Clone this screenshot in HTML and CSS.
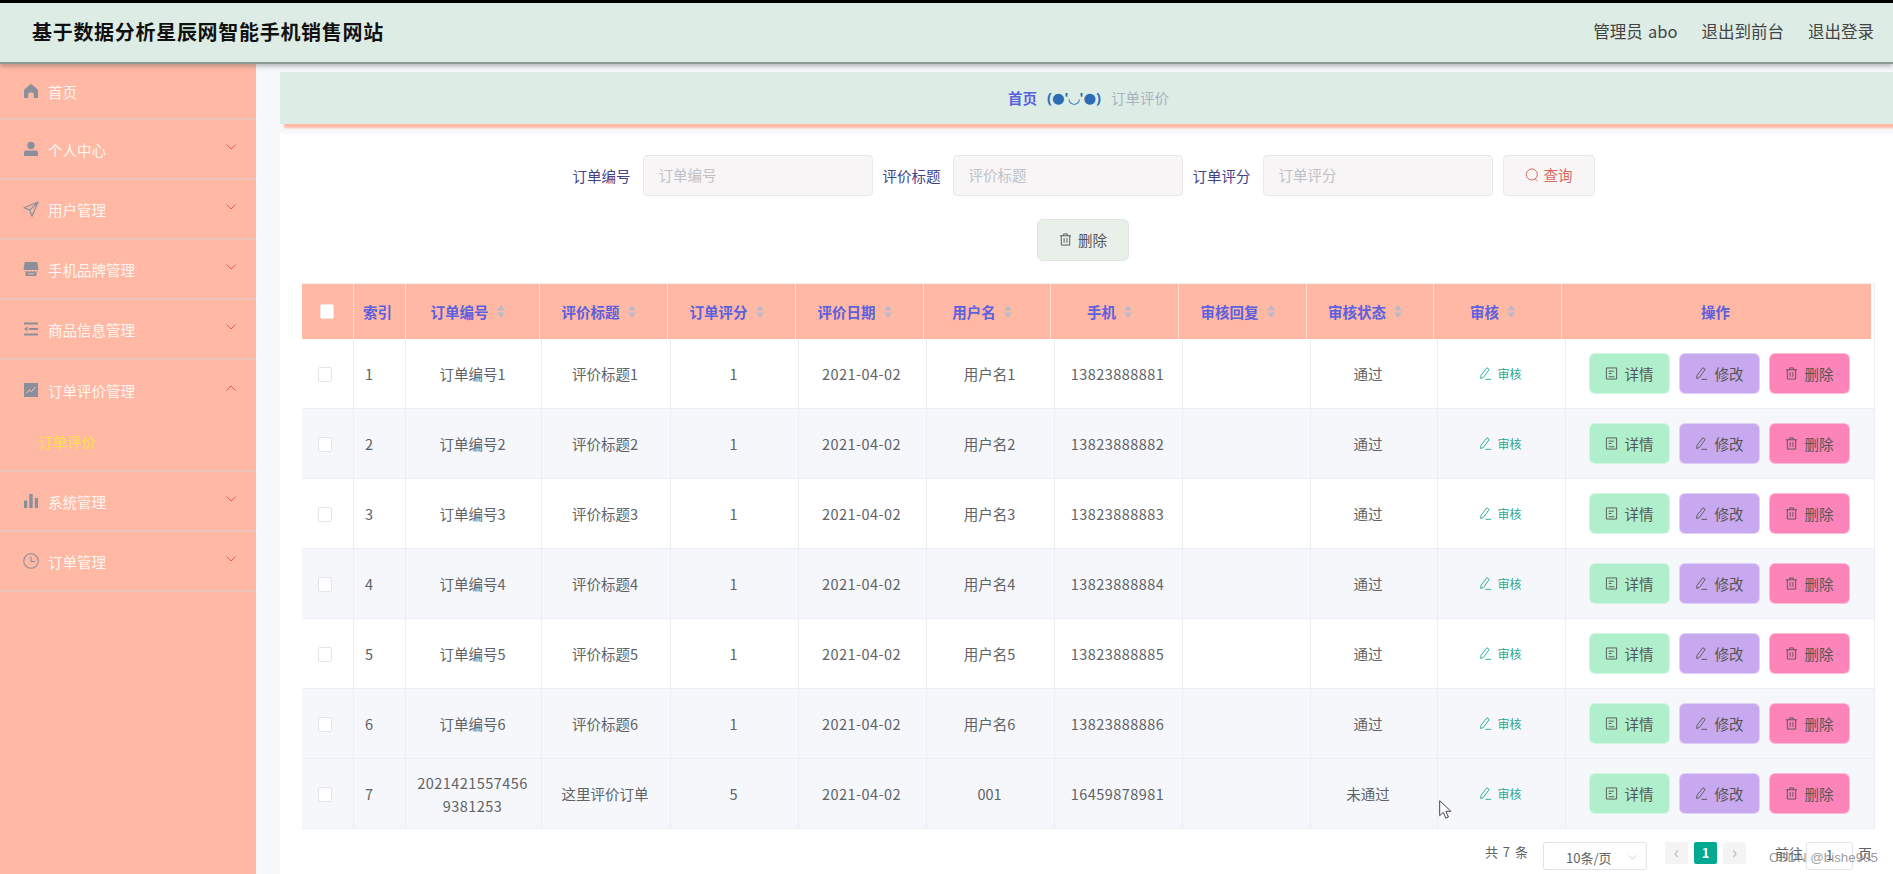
FILE: index.html
```html
<!DOCTYPE html>
<html lang="zh-CN">
<head>
<meta charset="utf-8">
<title>基于数据分析星辰网智能手机销售网站</title>
<link rel="stylesheet" href="styles.css">
</head>
<body>
<svg class="defs" aria-hidden="true">
  <symbol id="i-home" viewBox="0 0 16 16"><path d="M8 1.200c.4 0 .8.2 1 .4l5.600 5c.3.3.4.6.4 1V14c0 .6-.4 1-1 1h-3.200v-3.600c0-1.100-.9-2-1.900-2H7.100c-1 0-1.900.9-1.900 2V15H2c-.6 0-1-.4-1-1V7.600c0-.4.1-.7.4-1l5.600-5c.2-.2.6-.4 1-.4z" fill="currentColor"/></symbol>
  <symbol id="i-user" viewBox="0 0 16 16"><circle cx="8" cy="4.400" r="3.700" fill="currentColor"/><path d="M3 9.600h10c1.200 0 2 .9 2 2V15H1v-3.400c0-1.100.8-2 2-2z" fill="currentColor"/></symbol>
  <symbol id="i-plane" viewBox="0 0 16 16"><path d="M15 1 1 6.800l5.800 2.300L9 15.200 15 1zM6.800 9.100 15 1" fill="none" stroke="currentColor" stroke-width="1.200" stroke-linejoin="round"/></symbol>
  <symbol id="i-shop" viewBox="0 0 16 16"><path d="M2.500 1h11c.5 0 .9.300 1 .8L15.500 9H.5l1-7.200c.1-.5.500-.8 1-.8z" fill="currentColor"/><path d="M1 10c1.200 1 2.400 1 3.500 0 1.100 1 2.300 1 3.500 0 1.100 1 2.300 1 3.500 0 1.100 1 2.300 1 3.500 0v.5L13.500 11v3c0 .6-.4 1-1 1h-9c-.6 0-1-.4-1-1v-3L1 10.500V10z" fill="currentColor"/><path d="M5 12.800h6" stroke="#ffb8a3" stroke-width="1"/></symbol>
  <symbol id="i-fold" viewBox="0 0 16 16"><path d="M1 1.500h14v2H1zM6 7h9v2H6zM1 12.500h14v2H1zM1 8l3.500-2.400v4.800z" fill="currentColor"/></symbol>
  <symbol id="i-chart" viewBox="0 0 16 16"><path d="M1 1h14v14H1z" fill="currentColor"/><path d="M3.500 11l3-3 2 1.500 4-4.500" fill="none" stroke="#ffc9b8" stroke-width="1"/></symbol>
  <symbol id="i-bars" viewBox="0 0 16 16"><path d="M1 7.500h3.200V15H1zM6.300 1h3.400v14H6.300zM11.800 5H15v10h-3.200z" fill="currentColor"/></symbol>
  <symbol id="i-clock" viewBox="0 0 16 16"><circle cx="8" cy="8" r="7.300" fill="none" stroke="currentColor" stroke-width="1.100"/><path d="M8 3.800V8.500h4" fill="none" stroke="currentColor" stroke-width="1.100"/></symbol>
  <symbol id="i-down" viewBox="0 0 10 6"><path d="M.5.500 5 5 9.500.500" fill="none" stroke="currentColor" stroke-width="1"/></symbol>
  <symbol id="i-up" viewBox="0 0 10 6"><path d="M.5 5.500 5 1l4.500 4.500" fill="none" stroke="currentColor" stroke-width="1"/></symbol>
  <symbol id="i-search" viewBox="0 0 14 14"><circle cx="6.800" cy="6.500" r="5.500" fill="none" stroke="currentColor" stroke-width="1"/><path d="m10 10.500 2 2.300" stroke="currentColor" stroke-width="1"/></symbol>
  <symbol id="i-trash" viewBox="0 0 14 14"><path d="M1 3h12M5 3V1h4v2M2.500 3v10h9V3M5.500 5.500v5M8.500 5.500v5" fill="none" stroke="currentColor" stroke-width="1"/></symbol>
  <symbol id="i-ticket" viewBox="0 0 14 14"><path d="M1.500 1h11v12h-11zM4 4.500h5.500M4 7h3M4 10.500h6" fill="none" stroke="currentColor" stroke-width="1"/></symbol>
  <symbol id="i-edit" viewBox="0 0 14 14"><path d="M8.500.8 11 2.600 4.800 11.200l-3 1.200.3-3.300L8.500.8zM7 13.300h6" fill="none" stroke="currentColor" stroke-width="1"/></symbol>
  <symbol id="i-sort" viewBox="0 0 8 13"><path d="M4 0l4 5.500H0zM4 13 0 7.500h8z" fill="currentColor"/></symbol>
</svg>

<header class="topbar">
  <h1 class="site-title">基于数据分析星辰网智能手机销售网站</h1>
  <nav class="top-links">
    <span class="admin">管理员 abo</span>
    <span>退出到前台</span>
    <span>退出登录</span>
  </nav>
</header>

<div class="layout">
  <aside class="sidebar">
    <div class="menu-item first"><svg class="menu-icon"><use href="#i-home"/></svg><span>首页</span></div>
    <div class="menu-item"><svg class="menu-icon"><use href="#i-user"/></svg><span>个人中心</span><svg class="chev"><use href="#i-down"/></svg></div>
    <div class="menu-item"><svg class="menu-icon"><use href="#i-plane"/></svg><span>用户管理</span><svg class="chev"><use href="#i-down"/></svg></div>
    <div class="menu-item"><svg class="menu-icon"><use href="#i-shop"/></svg><span>手机品牌管理</span><svg class="chev"><use href="#i-down"/></svg></div>
    <div class="menu-item"><svg class="menu-icon"><use href="#i-fold"/></svg><span>商品信息管理</span><svg class="chev"><use href="#i-down"/></svg></div>
    <div class="menu-group">
      <div class="menu-item open"><svg class="menu-icon"><use href="#i-chart"/></svg><span>订单评价管理</span><svg class="chev"><use href="#i-up"/></svg></div>
      <div class="submenu-item">订单评价</div>
    </div>
    <div class="menu-item"><svg class="menu-icon"><use href="#i-bars"/></svg><span>系统管理</span><svg class="chev"><use href="#i-down"/></svg></div>
    <div class="menu-item"><svg class="menu-icon"><use href="#i-clock"/></svg><span>订单管理</span><svg class="chev"><use href="#i-down"/></svg></div>
  </aside>

  <main class="content">
    <div class="crumbs">
      <span class="crumb-home">首页</span>
      <span class="crumb-face">(●'◡'●)</span>
      <span class="crumb-current">订单评价</span>
    </div>

    <section class="card">
      <form class="search-row">
        <label class="search-label">订单编号</label>
        <input class="search-input" placeholder="订单编号">
        <label class="search-label">评价标题</label>
        <input class="search-input" placeholder="评价标题">
        <label class="search-label">订单评分</label>
        <input class="search-input" placeholder="订单评分">
        <button type="button" class="search-btn"><svg class="search-icon"><use href="#i-search"/></svg>查询</button>
      </form>
      <div class="bulk-row">
        <button type="button" class="bulk-del"><svg class="btn-icon"><use href="#i-trash"/></svg>删除</button>
      </div>

      <div class="table">
        <div class="thead">
          <div class="th"><span class="check head-check"></span></div>
          <div class="th left">索引</div>
          <div class="th">订单编号<span class="sort"><svg><use href="#i-sort"/></svg></span></div>
          <div class="th">评价标题<span class="sort"><svg><use href="#i-sort"/></svg></span></div>
          <div class="th">订单评分<span class="sort"><svg><use href="#i-sort"/></svg></span></div>
          <div class="th">评价日期<span class="sort"><svg><use href="#i-sort"/></svg></span></div>
          <div class="th">用户名<span class="sort"><svg><use href="#i-sort"/></svg></span></div>
          <div class="th">手机<span class="sort"><svg><use href="#i-sort"/></svg></span></div>
          <div class="th">审核回复<span class="sort"><svg><use href="#i-sort"/></svg></span></div>
          <div class="th">审核状态<span class="sort"><svg><use href="#i-sort"/></svg></span></div>
          <div class="th">审核<span class="sort"><svg><use href="#i-sort"/></svg></span></div>
          <div class="th">操作</div>
        </div>

        <div class="tr">
          <div class="td check-cell"><span class="check"></span></div><div class="td left">1</div><div class="td">订单编号1</div><div class="td">评价标题1</div><div class="td">1</div><div class="td num">2021-04-02</div><div class="td">用户名1</div><div class="td num">13823888881</div><div class="td"></div><div class="td status">通过</div>
          <div class="td"><span class="audit"><svg class="btn-icon"><use href="#i-edit"/></svg>审核</span></div>
          <div class="td actions"><button type="button" class="act green"><svg class="act-icon"><use href="#i-ticket"/></svg>详情</button><button type="button" class="act purple"><svg class="act-icon"><use href="#i-edit"/></svg>修改</button><button type="button" class="act pink"><svg class="act-icon"><use href="#i-trash"/></svg>删除</button></div>
        </div>
        <div class="tr even">
          <div class="td check-cell"><span class="check"></span></div><div class="td left">2</div><div class="td">订单编号2</div><div class="td">评价标题2</div><div class="td">1</div><div class="td num">2021-04-02</div><div class="td">用户名2</div><div class="td num">13823888882</div><div class="td"></div><div class="td status">通过</div>
          <div class="td"><span class="audit"><svg class="btn-icon"><use href="#i-edit"/></svg>审核</span></div>
          <div class="td actions"><button type="button" class="act green"><svg class="act-icon"><use href="#i-ticket"/></svg>详情</button><button type="button" class="act purple"><svg class="act-icon"><use href="#i-edit"/></svg>修改</button><button type="button" class="act pink"><svg class="act-icon"><use href="#i-trash"/></svg>删除</button></div>
        </div>
        <div class="tr">
          <div class="td check-cell"><span class="check"></span></div><div class="td left">3</div><div class="td">订单编号3</div><div class="td">评价标题3</div><div class="td">1</div><div class="td num">2021-04-02</div><div class="td">用户名3</div><div class="td num">13823888883</div><div class="td"></div><div class="td status">通过</div>
          <div class="td"><span class="audit"><svg class="btn-icon"><use href="#i-edit"/></svg>审核</span></div>
          <div class="td actions"><button type="button" class="act green"><svg class="act-icon"><use href="#i-ticket"/></svg>详情</button><button type="button" class="act purple"><svg class="act-icon"><use href="#i-edit"/></svg>修改</button><button type="button" class="act pink"><svg class="act-icon"><use href="#i-trash"/></svg>删除</button></div>
        </div>
        <div class="tr even">
          <div class="td check-cell"><span class="check"></span></div><div class="td left">4</div><div class="td">订单编号4</div><div class="td">评价标题4</div><div class="td">1</div><div class="td num">2021-04-02</div><div class="td">用户名4</div><div class="td num">13823888884</div><div class="td"></div><div class="td status">通过</div>
          <div class="td"><span class="audit"><svg class="btn-icon"><use href="#i-edit"/></svg>审核</span></div>
          <div class="td actions"><button type="button" class="act green"><svg class="act-icon"><use href="#i-ticket"/></svg>详情</button><button type="button" class="act purple"><svg class="act-icon"><use href="#i-edit"/></svg>修改</button><button type="button" class="act pink"><svg class="act-icon"><use href="#i-trash"/></svg>删除</button></div>
        </div>
        <div class="tr">
          <div class="td check-cell"><span class="check"></span></div><div class="td left">5</div><div class="td">订单编号5</div><div class="td">评价标题5</div><div class="td">1</div><div class="td num">2021-04-02</div><div class="td">用户名5</div><div class="td num">13823888885</div><div class="td"></div><div class="td status">通过</div>
          <div class="td"><span class="audit"><svg class="btn-icon"><use href="#i-edit"/></svg>审核</span></div>
          <div class="td actions"><button type="button" class="act green"><svg class="act-icon"><use href="#i-ticket"/></svg>详情</button><button type="button" class="act purple"><svg class="act-icon"><use href="#i-edit"/></svg>修改</button><button type="button" class="act pink"><svg class="act-icon"><use href="#i-trash"/></svg>删除</button></div>
        </div>
        <div class="tr even">
          <div class="td check-cell"><span class="check"></span></div><div class="td left">6</div><div class="td">订单编号6</div><div class="td">评价标题6</div><div class="td">1</div><div class="td num">2021-04-02</div><div class="td">用户名6</div><div class="td num">13823888886</div><div class="td"></div><div class="td status">通过</div>
          <div class="td"><span class="audit"><svg class="btn-icon"><use href="#i-edit"/></svg>审核</span></div>
          <div class="td actions"><button type="button" class="act green"><svg class="act-icon"><use href="#i-ticket"/></svg>详情</button><button type="button" class="act purple"><svg class="act-icon"><use href="#i-edit"/></svg>修改</button><button type="button" class="act pink"><svg class="act-icon"><use href="#i-trash"/></svg>删除</button></div>
        </div>
        <div class="tr even">
          <div class="td check-cell"><span class="check"></span></div><div class="td left">7</div><div class="td num wrap">20214215574569381253</div><div class="td">这里评价订单</div><div class="td">5</div><div class="td num">2021-04-02</div><div class="td">001</div><div class="td num">16459878981</div><div class="td"></div><div class="td status">未通过</div>
          <div class="td"><span class="audit"><svg class="btn-icon"><use href="#i-edit"/></svg>审核</span></div>
          <div class="td actions"><button type="button" class="act green"><svg class="act-icon"><use href="#i-ticket"/></svg>详情</button><button type="button" class="act purple"><svg class="act-icon"><use href="#i-edit"/></svg>修改</button><button type="button" class="act pink"><svg class="act-icon"><use href="#i-trash"/></svg>删除</button></div>
        </div>
      </div>

      <div class="pager">
        <span class="pager-total">共 7 条</span>
        <div class="pager-size"><span>10条/页</span><svg class="pager-chev"><use href="#i-down"/></svg></div>
        <span class="pager-nav">&#8249;</span>
        <span class="pager-page">1</span>
        <span class="pager-nav">&#8250;</span>
        <span class="pager-goto">前往</span>
        <span class="pager-input">1</span>
        <span class="pager-unit">页</span>
      </div>
    </section>
  </main>
</div>

<svg class="cursor" viewBox="0 0 12 19"><path d="M.7.700v15l3.600-3.400 2.500 5.800 2.600-1.100-2.500-5.700h5z" fill="#fff" stroke="#444" stroke-width="1"/></svg>
<div class="watermark">CSDN @bishe905</div>
</body>
</html>
```

FILE: styles.css
```css
* { box-sizing: border-box; }

html, body {
  margin: 0;
  height: 874px;
  overflow: hidden;
}

body {
  position: relative;
  display: flex;
  flex-direction: column;
  font-family: "Noto Sans CJK SC", "Noto Sans", sans-serif;
  font-size: 14.5px;
  color: #606266;
  background: #f6f8fa;
}

.defs { width: 0; height: 0; position: absolute; }

/* top bar */
.topbar {
  position: relative;
  z-index: 2;
  flex: none;
  height: 64px;
  display: flex;
  align-items: center;
  justify-content: space-between;
  padding: 0 19px 2px 32px;
  background: #ddede6;
  border-top: 3px solid #000;
  border-bottom: 2px solid #8e9a96;
  box-shadow: 0 2px 5px rgba(90, 90, 90, .45);
}

.site-title {
  margin: 0;
  font-size: 20px;
  letter-spacing: .7px;
  font-weight: 700;
  color: #111;
}

.top-links {
  display: flex;
  gap: 24px;
  padding-bottom: 2px;
  font-size: 16.5px;
  color: #444;
}

.admin { word-spacing: 1.500px; }

/* layout */
.layout {
  flex: 1;
  min-height: 0;
  display: flex;
}

.sidebar {
  flex: none;
  width: 256px;
  background: #ffb8a3;
  overflow: hidden;
  color: #fff6f2;
}

.menu-item {
  display: flex;
  align-items: center;
  height: 60px;
  padding: 0 20px 0 23px;
  border-bottom: 2px solid #ecc4bc;
}

.menu-item.first {
  margin-top: -4px;
  padding-top: 4px;
}

.menu-item.open {
  height: 58px;
  padding-top: 2px;
  border-bottom: 0;
}

.menu-group { border-bottom: 2px solid #ecc4bc; }

.submenu-item {
  height: 52px;
  padding: 14px 0 0 38px;
  line-height: 20px;
  color: #ffe14a;
}

.menu-icon {
  flex: none;
  width: 16px;
  height: 16px;
  margin-right: 9px;
  color: #8b8e9b;
}

.chev {
  flex: none;
  width: 10px;
  height: 6px;
  margin: 0 0 4px auto;
  color: #f4574a;
}

/* content */
.content {
  flex: 1;
  min-width: 0;
  padding: 8px 0 0 24px;
}

.crumbs {
  height: 52px;
  display: flex;
  align-items: center;
  justify-content: center;
  gap: 10px;
  padding: 0 0 2px 4px;
  background: #ddede6;
  box-shadow: 4px 4px 2px #ffb8a3;
}

.crumb-home { font-weight: 700; color: #5b60de; }
.crumb-face { font-weight: 700; color: #2a6db5; font-family: "Noto Sans", "DejaVu Sans", sans-serif; }
.crumb-current { color: #a6b2c0; }

.card {
  margin-top: 10px;
  height: 740px;
  padding: 21px 18px 0 22px;
  background: #fff;
}

.search-row {
  display: flex;
  align-items: center;
  justify-content: center;
  padding-right: 10px;
  height: 41px;
}

.search-label {
  margin-right: 12px;
  padding-bottom: 1px;
  color: #3f4488;
}

.search-input {
  width: 230px;
  height: 41px;
  margin-right: 10px;
  padding: 0 15px 2px;
  font: inherit;
  background: #f7f5f6;
  border: 1px solid #e8e8ea;
  border-radius: 4px;
  outline: 0;
}

.search-input::placeholder { color: #bfc1c6; }

.search-btn {
  width: 92px;
  height: 41px;
  display: flex;
  align-items: center;
  justify-content: center;
  gap: 5px;
  padding: 0 0 2px;
  font: inherit;
  color: #d9695f;
  background: #f7f5f6;
  border: 1px solid #e8e8ea;
  border-radius: 4px;
}

.search-icon {
  flex: none;
  width: 14px;
  height: 14px;
}

.btn-icon {
  flex: none;
  width: 13px;
  height: 13px;
}

.bulk-row {
  display: flex;
  justify-content: center;
  padding-right: 11px;
  margin-top: 23px;
}

.bulk-del {
  width: 92px;
  height: 42px;
  display: flex;
  align-items: center;
  justify-content: center;
  gap: 6px;
  padding: 0 0 2px;
  font: inherit;
  color: #555;
  background: #e9f0ea;
  border: 1px solid #dde6df;
  border-radius: 6px;
}

/* table */
.table {
  margin-top: 22px;
  border-top: 1px solid #ebeef5;
  border-right: 1px solid #ebeef5;
}

.thead {
  display: grid;
  grid-template-columns: 52px 52px 134px 128px 128px 128px 127px 128px 128px 127px 128px 309px;
  height: 55px;
  margin-right: 3px;
}

.th {
  display: flex;
  align-items: center;
  justify-content: center;
  padding-right: 2px;
  background: #ffb8a3;
  border-right: 1px solid #ffdccf;
  font-weight: 700;
  color: #5b60de;
}

.th:last-child { border-right: 0; }

.th.left { justify-content: flex-start; padding: 0 0 0 9px; }

.sort {
  display: flex;
  justify-content: center;
  width: 24px;
  color: #b9bac6;
}

.sort svg { width: 8px; height: 13px; }

.tr {
  display: grid;
  grid-template-columns: 52px 52px 136px 129px 128px 128px 128px 128px 128px 127px 128px 1fr;
  height: 70px;
  background: #fff;
}

.tr.even { background: #f5f7fb; }

.td {
  display: flex;
  align-items: center;
  justify-content: center;
  padding-right: 2px;
  border-right: 1px solid #ebeef5;
  border-bottom: 1px solid #ebeef5;
  text-align: center;
}

.td:last-child { border-right: 0; }
.td.left { padding: 0 0 0 11px; justify-content: flex-start; }
.td.status { padding-right: 12px; }
.td.check-cell { padding: 1px 6px 0 0; }

.num { letter-spacing: .45px; }

.td.wrap {
  padding: 0 13px 0 11px;
  line-height: 23px;
  word-break: break-all;
}

.check {
  width: 14px;
  height: 15px;
  background: #fff;
  border: 1px solid #e2e5ea;
  border-radius: 2px;
}

.head-check { border-color: #f2e6e2; }

.audit {
  display: flex;
  align-items: center;
  gap: 5px;
  font-size: 12px;
  color: #28a992;
}

.actions { gap: 9px; }

.act {
  width: 81px;
  height: 41px;
  display: flex;
  align-items: center;
  justify-content: center;
  gap: 7px;
  padding: 0;
  font: inherit;
  color: #555;
  border: 1px solid rgba(255, 255, 255, .45);
  border-radius: 6px;
}

.green { background: #b0efcb; }
.purple { background: #c8a9ef; }
.pink { background: #fc84b8; }

.act-icon {
  flex: none;
  width: 13px;
  height: 13px;
}

/* pager */
.pager {
  display: flex;
  align-items: flex-start;
  justify-content: flex-end;
  padding: 13px 3px 0 0;
  font-size: 13px;
}

.pager-total {
  margin-right: 15px;
  line-height: 20px;
  word-spacing: 2px;
}

.pager-size {
  width: 104px;
  height: 28px;
  display: flex;
  align-items: center;
  padding: 2px 9px 0 22px;
  background: #fff;
  border: 1px solid #e2e4e9;
  border-radius: 3px;
  margin-right: 18px;
}

.pager-chev {
  width: 9px;
  height: 5px;
  margin-left: auto;
  color: #c0c4cc;
}

.pager-nav {
  width: 23px;
  height: 22px;
  text-align: center;
  line-height: 19px;
  font-size: 18px;
  color: #b9bdc6;
  background: #f4f4f5;
  border-radius: 2px;
}

.pager-page {
  width: 23px;
  height: 22px;
  margin: 0 6px;
  text-align: center;
  line-height: 22px;
  font-weight: 700;
  color: #fff;
  background: #00a98f;
  border-radius: 2px;
}

.pager-goto {
  margin-left: 29px;
  font-size: 14px;
  line-height: 22px;
}

.pager-input {
  width: 47px;
  height: 28px;
  margin: 0 5px 0 3px;
  text-align: center;
  line-height: 24px;
  background: #fff;
  border: 1px solid #e2e4e9;
  border-radius: 3px;
}

.pager-unit {
  font-size: 14px;
  line-height: 22px;
}

/* overlays */
.cursor {
  position: absolute;
  left: 1439px;
  top: 800px;
  width: 12px;
  height: 19px;
}

.watermark {
  position: absolute;
  left: 1769px;
  top: 850px;
  font-family: "Liberation Sans", sans-serif;
  font-size: 13.300px;
  line-height: 16px;
  color: rgba(110, 110, 110, .7);
}
```
